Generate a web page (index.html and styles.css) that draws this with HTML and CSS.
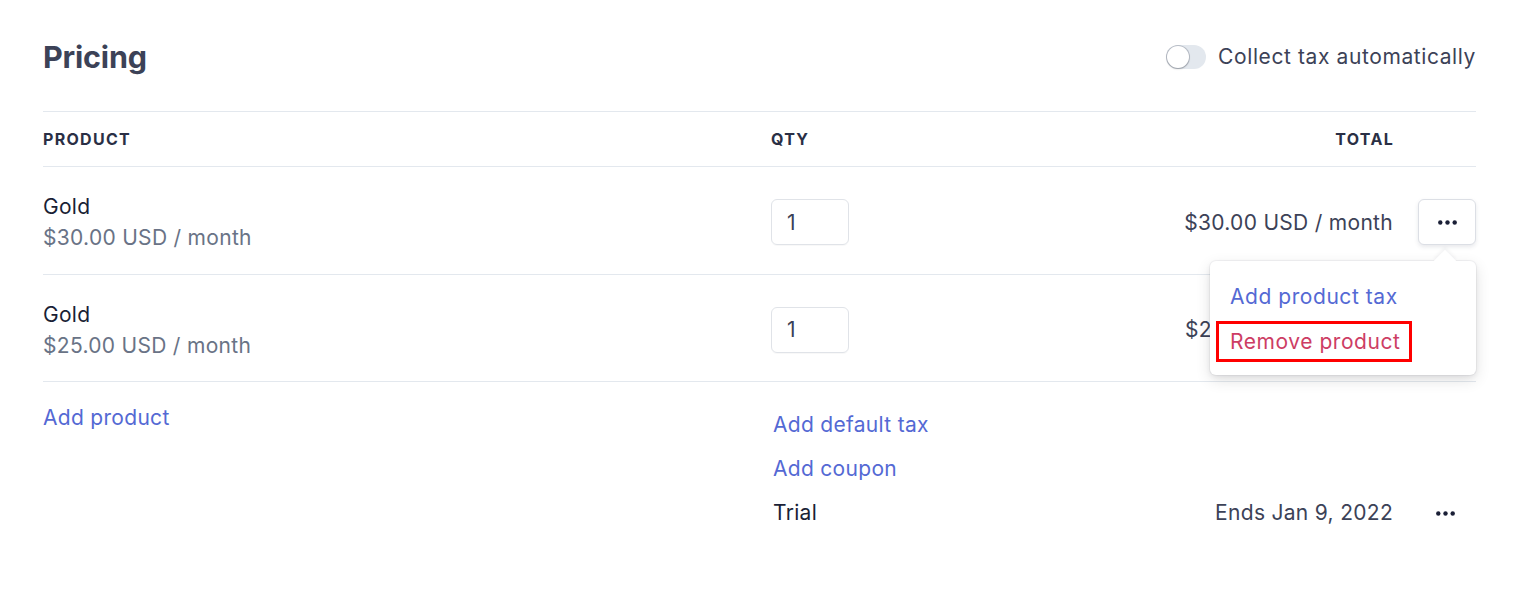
FILE: index.html
```html
<!DOCTYPE html>
<html>
<head>
<meta charset="utf-8">
<link rel="stylesheet" href="styles.css">
</head>
<body>
<div class="page">
  <div class="head">
    <h1 class="title">Pricing</h1>
    <label class="toggle-wrap">
      <span class="toggle"><span class="knob"></span></span>
      <span class="toggle-label">Collect tax automatically</span>
    </label>
  </div>
  <div class="table">
    <div class="row header">
      <div class="c1">PRODUCT</div>
      <div class="c2">QTY</div>
      <div class="c3">TOTAL</div>
      <div class="c4"></div>
    </div>
    <div class="row item first">
      <div class="c1">
        <div class="name">Gold</div>
        <div class="price">$30.00 USD / month</div>
      </div>
      <div class="c2"><div class="qty">1</div></div>
      <div class="c3 total">$30.00 USD / month</div>
      <div class="c4 menu-cell">
        <button class="more"><svg width="19" height="5" viewBox="0 0 19 5"><circle cx="2.3" cy="2.5" r="2.2"/><circle cx="9.5" cy="2.5" r="2.2"/><circle cx="16.7" cy="2.5" r="2.2"/></svg></button>
        <div class="dropdown">
          <div class="arrow"></div>
          <div class="dd-item link">Add product tax</div>
          <div class="dd-item danger"><span class="hl">Remove product</span></div>
        </div>
      </div>
    </div>
    <div class="row item">
      <div class="c1">
        <div class="name">Gold</div>
        <div class="price">$25.00 USD / month</div>
      </div>
      <div class="c2"><div class="qty">1</div></div>
      <div class="c3 total">$25.00 USD / month</div>
      <div class="c4"></div>
    </div>
    <div class="footer">
      <div class="c1"><span class="link">Add product</span></div>
      <div class="extras">
        <div class="link">Add default tax</div>
        <div class="link">Add coupon</div>
        <div class="trial">
          <span class="trial-name">Trial</span>
          <span class="trial-end">Ends Jan 9, 2022</span>
        </div>
      </div>
      <div class="c4 dots-cell">
        <svg class="dots" width="19" height="5" viewBox="0 0 19 5"><circle cx="2.3" cy="2.5" r="2.2"/><circle cx="9.5" cy="2.5" r="2.2"/><circle cx="16.7" cy="2.5" r="2.2"/></svg>
      </div>
    </div>
  </div>
</div>
</body>
</html>
```
FILE: styles.css
```css
* { box-sizing: border-box; }
body {
  margin: 0;
  background: #fff;
  font-family: Inter, "Noto Sans", sans-serif;
  color: #1a1f36;
}
.page {
  padding: 0 60px 0 43px;
}
.head {
  height: 111px;
  display: flex;
  align-items: center;
  justify-content: space-between;
  padding-top: 2px;
}
.title {
  margin: 0;
  font-size: 30.5px;
  font-weight: 700;
  color: #3c4257;
  letter-spacing: -0.2px;
}
.toggle-wrap {
  display: flex;
  align-items: center;
  gap: 12px;
}
.toggle {
  width: 40px;
  height: 24px;
  border-radius: 12px;
  background: #e3e8ee;
  position: relative;
  display: block;
}
.knob {
  position: absolute;
  left: 1px;
  top: 1px;
  width: 22px;
  height: 22px;
  border-radius: 50%;
  background: #fff;
  box-shadow: 0 0 0 1px rgba(60,66,87,0.25), 0 1px 2px rgba(0,0,0,0.2);
}
.toggle-label {
  font-size: 21px;
  letter-spacing: 0.6px;
  color: #3c4257;
}
.table {
  border-top: 1px solid #e3e8ee;
}
.row, .footer {
  display: grid;
  grid-template-columns: 728px 200px 1fr 83px;
  align-items: center;
}
.row { border-bottom: 1px solid #e3e8ee; }
.header {
  height: 55px;
  font-size: 16px;
  font-weight: 700;
  letter-spacing: 1.3px;
  color: #2a2f45;
}
.header .c3 { text-align: right; margin-right: -1px; }
.item {
  height: 107px;
  font-size: 21px;
  letter-spacing: 0.3px;
  padding-top: 3px;
}
.item.first { height: 108px; }
.name { color: #1a1f36; line-height: 31px; }
.price { color: #697386; line-height: 31px; }
.qty {
  width: 78px;
  height: 46px;
  border: 1px solid #e0e3e8;
  border-radius: 6px;
  padding: 0 15px;
  display: flex;
  align-items: center;
  color: #3c4257;
  box-shadow: 0 1px 1px rgba(0,0,0,0.03);
}
.total { text-align: right; color: #3c4257; }
.menu-cell {
  position: relative;
  display: flex;
  justify-content: flex-end;
}
.more {
  width: 58px;
  height: 46px;
  border-radius: 6px;
  background: #fff;
  border: 1px solid #dcdfe5;
  box-shadow: 0 2px 4px rgba(60,66,87,0.12);
  display: flex;
  align-items: center;
  justify-content: center;
  padding: 0;
}
.more svg, .dots { fill: #1a1f36; display: block; }
.dropdown {
  position: absolute;
  right: 0;
  top: 62px;
  width: 266px;
  height: 114px;
  background: #fff;
  border-radius: 6px;
  box-shadow: 0 0 0 1px rgba(60,66,87,0.05), 0 5px 15px rgba(0,0,0,0.12), 0 2px 5px rgba(60,66,87,0.08);
  padding: 22px 0 0 20px;
  z-index: 2;
}
.arrow {
  position: absolute;
  top: -8px;
  right: 23px;
  width: 16px;
  height: 16px;
  background: #fff;
  transform: rotate(45deg);
  box-shadow: -2px -2px 3px rgba(60,66,87,0.06);
}
.dd-item {
  font-size: 21px;
  letter-spacing: 0.55px;
  line-height: 28px;
  position: relative;
}
.dd-item + .dd-item { margin-top: 16px; }
.link { color: #5469d4; }
.danger { color: #cd3d64; }
.hl {
  display: inline-block;
  margin-left: -14px;
  margin-top: -6px;
  padding: 4px 9px 3px 11px;
  border: 3px solid #ff0000;
}
.footer {
  align-items: start;
  font-size: 21px;
  letter-spacing: 0.3px;
  padding-top: 22px;
}
.footer .c1 { line-height: 28px; }
.extras {
  grid-column: 2 / 4;
  padding-top: 7px;
  padding-left: 2px;
  display: flex;
  flex-direction: column;
  gap: 16px;
}
.extras > div { line-height: 28px; }
.trial {
  display: flex;
  justify-content: space-between;
  color: #1a1f36;
}
.trial-end { color: #3c4257; }
.dots-cell {
  padding-top: 107px;
  display: flex;
  justify-content: center;
  padding-left: 22px;
}
```
